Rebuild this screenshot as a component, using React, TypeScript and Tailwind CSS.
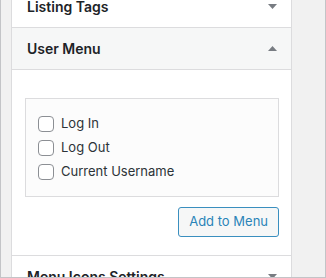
const font = { fontFamily: 'Inter, "Liberation Sans", Arial, sans-serif' };

const Arrow = ({ up }: { up?: boolean }) => (
  <svg width="9" height="5" viewBox="0 0 9 5" className="text-[#787c82]">
    <path d={up ? "M0 5 L4.5 0 L9 5 Z" : "M0 0 L4.5 5 L9 0 Z"} fill="currentColor" />
  </svg>
);

const SectionHeader = ({ title, open, gray }: { title: string; open?: boolean; gray?: boolean }) => (
  <div
    className={`h-[42px] shrink-0 flex items-center justify-between pl-[15px] pr-[14px] border-b border-[#dcdcde] ${
      gray ? "bg-[#f6f7f7]" : "bg-white"
    }`}
  >
    <span className="text-[14px] font-semibold text-[#1d2327]">{title}</span>
    <Arrow up={open} />
  </div>
);

const items = ["Log In", "Log Out", "Current Username"];

export default function App() {
  return (
    <div
      style={font}
      className="w-[326px] h-[278px] overflow-hidden bg-[#f1f1f1] border-x border-b border-[#c3c4c7] pl-[10px]"
    >
      <div className="w-[281px] -mt-[15px] bg-white border border-[#dcdcde] flex flex-col">
        <SectionHeader title="Listing Tags" />
        <SectionHeader title="User Menu" open gray />
        <div className="h-[186px] shrink-0 border-b border-[#dcdcde] pt-[28px] pl-[13px] pr-[12px]">
          <div className="h-[99px] border border-[#dcdcde] bg-[#fcfcfc] pt-[13px] pl-[12px]">
            {items.map((label) => (
              <label key={label} className="h-[24px] flex items-center gap-[7px]">
                <span className="w-[16px] h-[16px] rounded-[4px] border border-[#8c8f94] bg-white" />
                <span className="text-[13px] text-[#2c3338]">{label}</span>
              </label>
            ))}
          </div>
          <div className="flex justify-end mt-[10px]">
            <button className="h-[30px] px-[10px] rounded-[3px] border border-[#3a8fbf] bg-[#f6f7f7] text-[13px] text-[#2a84b8]">
              Add to Menu
            </button>
          </div>
        </div>
        <SectionHeader title="Menu Icons Settings" />
      </div>
    </div>
  );
}
